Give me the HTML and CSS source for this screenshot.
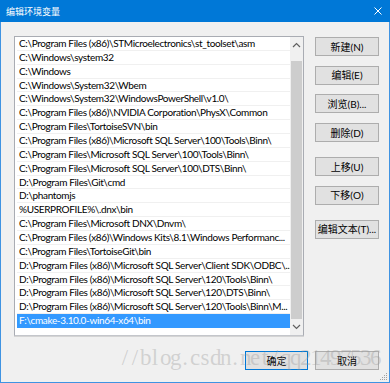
FILE: index.html
```html
<!DOCTYPE html>
<html>
<head>
<meta charset="utf-8">
<link rel="stylesheet" href="styles.css">
</head>
<body>
<div class="window">
  <div class="titlebar">
    <span class="title">编辑环境变量</span>
    <svg class="close" width="8" height="8" viewBox="0 0 8 8"><path d="M0.5 0.5 L7.5 7.5 M7.5 0.5 L0.5 7.5" stroke="#fff" stroke-width="1" fill="none"/></svg>
  </div>
  <div class="content">
    <div class="main">
      <div class="listbox">
        <div class="rows">
          <div class="row">C:\Program Files (x86)\STMicroelectronics\st_toolset\asm</div>
          <div class="row">C:\Windows\system32</div>
          <div class="row">C:\Windows</div>
          <div class="row">C:\Windows\System32\Wbem</div>
          <div class="row">C:\Windows\System32\WindowsPowerShell\v1.0\</div>
          <div class="row">C:\Program Files (x86)\NVIDIA Corporation\PhysX\Common</div>
          <div class="row">C:\Program Files\TortoiseSVN\bin</div>
          <div class="row">C:\Program Files (x86)\Microsoft SQL Server\100\Tools\Binn\</div>
          <div class="row">C:\Program Files\Microsoft SQL Server\100\Tools\Binn\</div>
          <div class="row">C:\Program Files\Microsoft SQL Server\100\DTS\Binn\</div>
          <div class="row">D:\Program Files\Git\cmd</div>
          <div class="row">D:\phantomjs</div>
          <div class="row">%USERPROFILE%\.dnx\bin</div>
          <div class="row">C:\Program Files\Microsoft DNX\Dnvm\</div>
          <div class="row">C:\Program Files (x86)\Windows Kits\8.1\Windows Performanc...</div>
          <div class="row">C:\Program Files\TortoiseGit\bin</div>
          <div class="row">D:\Program Files (x86)\Microsoft SQL Server\Client SDK\ODBC\...</div>
          <div class="row">D:\Program Files (x86)\Microsoft SQL Server\120\Tools\Binn\</div>
          <div class="row">D:\Program Files (x86)\Microsoft SQL Server\120\DTS\Binn\</div>
          <div class="row">D:\Program Files (x86)\Microsoft SQL Server\120\Tools\Binn\M...</div>
          <div class="row selected">F:\cmake-3.10.0-win64-x64\bin</div>
        </div>
        <div class="scrollbar">
          <div class="arrow up"><svg width="9" height="6" viewBox="0 0 9 6"><path d="M1 5 L4.5 1.5 L8 5" stroke="#606060" stroke-width="1.2" fill="none"/></svg></div>
          <div class="track"><div class="thumb"></div></div>
          <div class="arrow down"><svg width="9" height="6" viewBox="0 0 9 6"><path d="M1 1 L4.5 4.5 L8 1" stroke="#606060" stroke-width="1.2" fill="none"/></svg></div>
        </div>
      </div>
      <div class="buttons">
        <div class="group">
          <button class="btn">新建(N)</button>
          <button class="btn">编辑(E)</button>
          <button class="btn">浏览(B)...</button>
          <button class="btn">删除(D)</button>
        </div>
        <div class="group">
          <button class="btn">上移(U)</button>
          <button class="btn">下移(O)</button>
        </div>
        <div class="group">
          <button class="btn">编辑文本(T)...</button>
        </div>
      </div>
    </div>
    <div class="footer">
      <button class="btn default">确定</button>
      <button class="btn">取消</button>
    </div>
  </div>
  <div class="watermark"><span>/</span><span>/</span><span>b</span><span>l</span><span>o</span><span>g</span><span>.</span><span>c</span><span>s</span><span>d</span><span>n</span><span>.</span><span>n</span><span>e</span><span>t</span><span>/</span><span>q</span><span>q</span><span>2</span><span>1</span><span>4</span><span>9</span><span>7</span><span>5</span><span>3</span><span>6</span></div>
  <svg class="grip" width="8" height="8" viewBox="0 0 8 8">
    <rect x="6" y="0" width="1" height="1" fill="#a0a0a0"/>
    <rect x="4" y="2" width="1" height="1" fill="#a0a0a0"/><rect x="6" y="2" width="1" height="1" fill="#a0a0a0"/>
    <rect x="2" y="4" width="1" height="1" fill="#a0a0a0"/><rect x="4" y="4" width="1" height="1" fill="#a0a0a0"/><rect x="6" y="4" width="1" height="1" fill="#a0a0a0"/>
    <rect x="0" y="6" width="1" height="1" fill="#a0a0a0"/><rect x="2" y="6" width="1" height="1" fill="#a0a0a0"/><rect x="4" y="6" width="1" height="1" fill="#a0a0a0"/><rect x="6" y="6" width="1" height="1" fill="#a0a0a0"/>
  </svg>
</div>
</body>
</html>
```

FILE: styles.css
```css
* { box-sizing: border-box; }
html, body { margin: 0; padding: 0; }
body {
  width: 390px;
  height: 383px;
  overflow: hidden;
  font-family: "Lato", "Noto Sans CJK SC", sans-serif;
  background: #f0f0f0;
}
.window {
  position: relative;
  width: 390px;
  height: 383px;
  background: #f0f0f0;
  border: 1px solid #3f93e2;
  border-top: none;
  display: flex;
  flex-direction: column;
}
.titlebar {
  height: 22px;
  margin: 0 -1px;
  background: #0078d7;
  display: flex;
  align-items: center;
  justify-content: space-between;
  padding: 0 8px 0 6px;
  flex: none;
}
.title {
  color: #fff;
  font-family: "Noto Sans CJK SC", sans-serif;
  font-size: 9px;
  line-height: 1;
}
.close { display: block; }
.content {
  padding: 14px 9px 0 13px;
  display: flex;
  flex-direction: column;
}
.main {
  display: flex;
  gap: 11px;
}
.listbox {
  width: 290px;
  height: 300px;
  border: 1px solid #a9acb3;
  border-bottom-color: #c4c6cb;
  background: #fff;
  display: flex;
  box-shadow: 0 1px 0 #d4d4d4;
  flex: none;
}
.rows {
  flex: 1;
  min-width: 0;
  padding: 0 0 0 2px;
  overflow: hidden;
}
.row {
  height: 13.86px;
  line-height: 13px;
  font-family: "Lato", sans-serif;
  font-size: 10px;
  letter-spacing: -0.35px;
  color: #000;
  white-space: nowrap;
  overflow: hidden;
  padding-left: 2px;
  border-bottom: 1px solid #f0f0f0;
}
.row.selected {
  background: #3399ff;
  color: #fff;
  border-bottom-color: #3399ff;
}
.scrollbar {
  width: 13px;
  flex: none;
  display: flex;
  flex-direction: column;
  background: #f0f0f0;
}
.arrow {
  height: 16px;
  display: flex;
  align-items: center;
  justify-content: center;
  flex: none;
}
.arrow svg { display: block; }
.track {
  flex: 1;
  padding: 8px 1px 0 1px;
  display: flex;
}
.thumb {
  flex: 1;
  background: #cdcdcd;
}
.buttons {
  display: flex;
  flex-direction: column;
  gap: 15px;
  padding-top: 1px;
}
.group {
  display: flex;
  flex-direction: column;
  gap: 9.7px;
}
.btn {
  width: 64px;
  height: 19px;
  margin: 0;
  padding: 0;
  border: 1px solid #adadad;
  background: #e1e1e1;
  font-family: "Lato", "Noto Sans CJK SC", sans-serif;
  font-size: 10px;
  color: #000;
  line-height: 1;
  white-space: nowrap;
  display: flex;
  align-items: center;
  justify-content: center;
}
.btn.default {
  width: 63px;
  border-color: #0078d7;
}
.footer {
  display: flex;
  justify-content: flex-end;
  gap: 7px;
  margin-top: 15px;
  padding-right: 1px;
}
.watermark {
  position: absolute;
  left: 119px;
  top: 345px;
  display: flex;
  font-family: "Liberation Serif", serif;
  font-size: 23px;
  color: rgba(150, 150, 150, 0.35);
  white-space: nowrap;
  pointer-events: none;
}
.watermark span {
  width: 10px;
  text-align: center;
}
.grip {
  position: absolute;
  right: 1px;
  bottom: 1px;
}
```
